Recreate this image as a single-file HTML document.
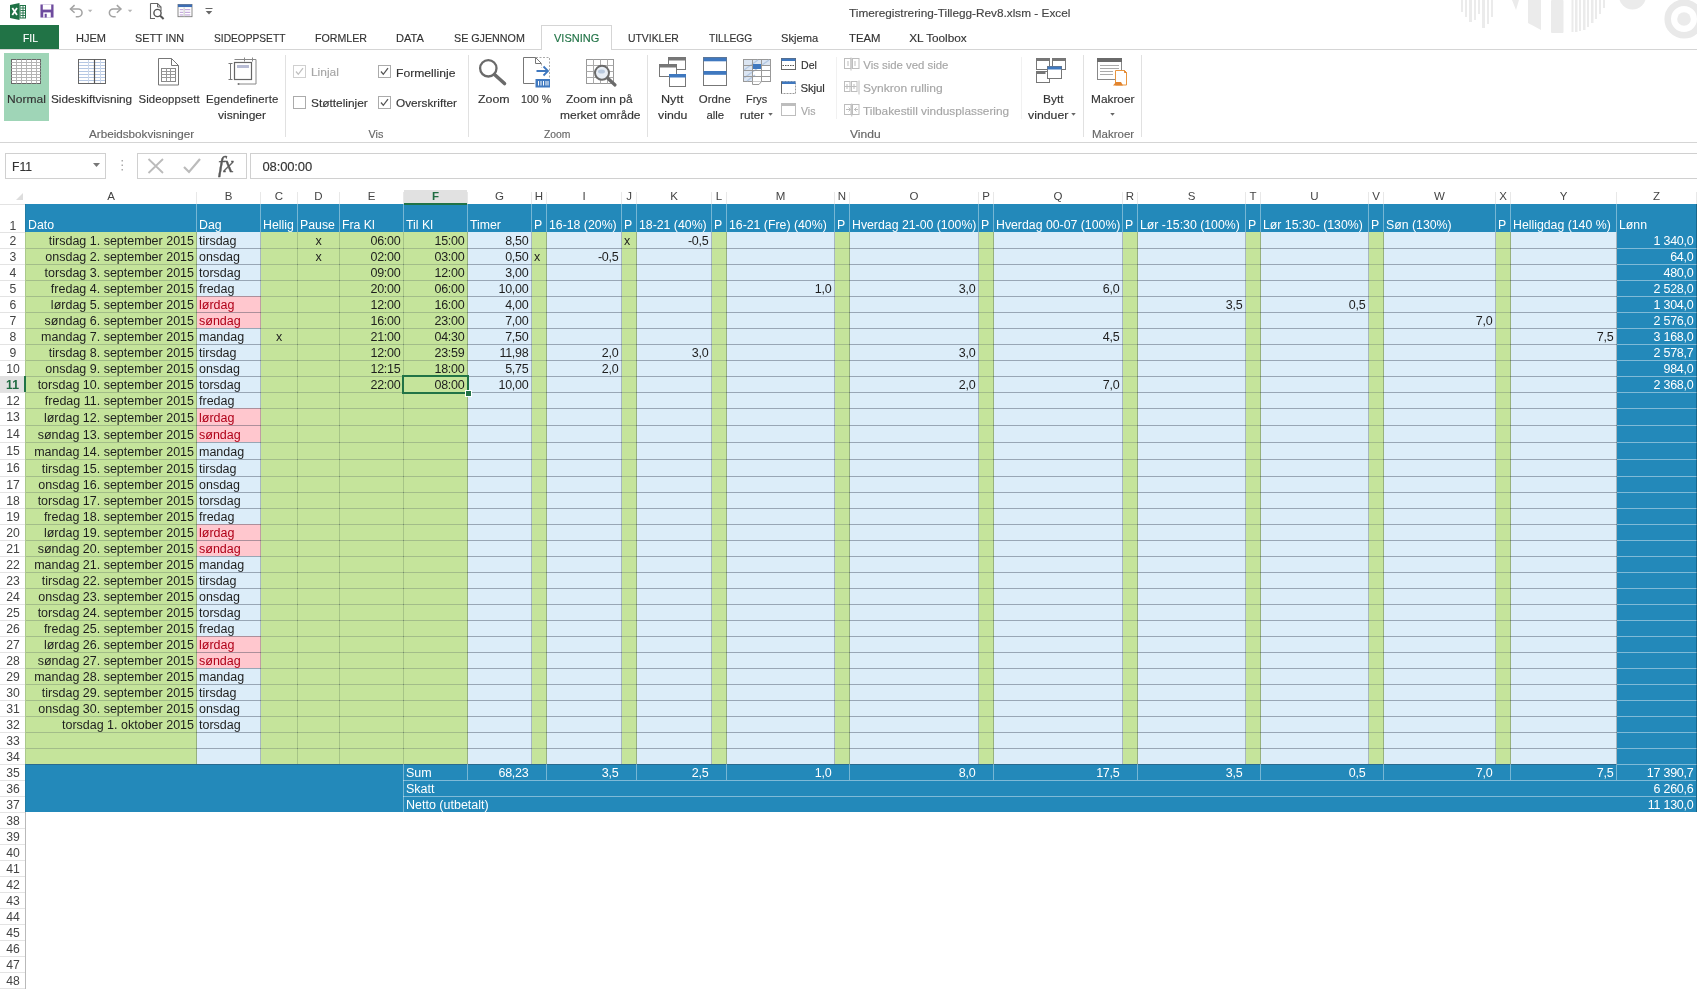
<!DOCTYPE html>
<html lang="nb"><head><meta charset="utf-8"><title>Timeregistrering-Tillegg-Rev8.xlsm - Excel</title>
<style>
html,body{margin:0;padding:0}
body{width:1697px;height:989px;overflow:hidden;background:#fff;position:relative;font-family:"Liberation Sans",sans-serif;color:#444}
#grid,#top{position:absolute;left:0;top:0;width:1697px;height:989px;will-change:transform}
#grid div,#grid i,#top div,#top i,#top svg,#top span.a{position:absolute}
i{display:block}
.blk{}
.ch{top:189px;height:15px;line-height:15px;text-align:center;font-size:11.5px;color:#444}
.ch.sel{background:#e1e1e1;color:#1e6b41;border-bottom:2px solid #217346;height:13px;top:190px;line-height:13px;font-weight:bold;z-index:3}
.hd{top:192px;width:1px;height:12px;background:#e8e8e8}
.rh{left:0;width:25px;text-align:center;font-size:12.2px;color:#444;padding-left:1px;box-sizing:border-box}
.rh.sel{background:#e1e1e1;color:#1e6b41;border-right:2px solid #217346;box-sizing:border-box;width:26px;padding-left:1px;font-weight:bold;z-index:3}
.rh.sel{padding-right:0}
.rd{left:0;width:25px;height:1px;background:#e3e3e3}
.hl{height:1px;background:rgba(50,60,80,.40)}
.hlb{height:1px;background:rgba(255,255,255,.42)}
.vl{width:1px;background:rgba(45,60,60,.30)}
.vlb{width:1px;background:rgba(255,255,255,.38)}
.c{font-size:12.5px;color:#1e1e1e;white-space:nowrap;overflow:visible;box-sizing:border-box}
.c.r{text-align:right;padding-right:2px}
.c.l{text-align:left;padding-left:2px}
.c.ctr{text-align:center}
.c.w{color:#fff;-webkit-text-stroke-color:#fff}
.c.red{color:#b00018}
.c.h1{font-size:12.3px;color:#fff;-webkit-text-stroke-color:#fff;padding-left:2px;line-height:16px;padding-top:13px;height:28px;box-sizing:border-box}
#selbox{border:2px solid #217346;box-sizing:content-box}
#selh{width:5px;height:5px;background:#217346;border:1px solid #fff}
/* top */
#top{font-size:12px;color:#444}
.tab{top:27px;height:22px;line-height:22px;font-size:12.5px;color:#444;white-space:nowrap}
.t{white-space:nowrap;font-size:12px;color:#444;line-height:14px;-webkit-text-stroke:.15px currentColor}
.t.g{color:#a6a6a6}
.gl{top:127px;height:14px;line-height:14px;font-size:11px;color:#666;letter-spacing:.6px;white-space:nowrap;transform:translateX(-50%)}
.sep{top:55px;width:1px;height:82px;background:#e1e1e1}
.cb{width:11px;height:11px;border:1px solid #ababab;background:#fff}
.bt{text-align:center;transform:translateX(-50%);white-space:nowrap;font-size:12px;line-height:16px;color:#444}
.c.n{letter-spacing:-.25px;padding-right:2.5px}

.vl.g{background:rgba(45,70,50,.2)}

</style></head><body>
<div id="top">
<!-- decoration top right -->
<svg style="left:1440px;top:0" width="257" height="48" viewBox="0 0 257 48">
<g fill="#ebebeb">
<rect x="21" y="0" width="2" height="12"/><rect x="25" y="0" width="2" height="17"/><rect x="29" y="0" width="3" height="22"/><rect x="34" y="0" width="2" height="20"/><rect x="38" y="0" width="2" height="14"/><rect x="42" y="0" width="3" height="28"/><rect x="47" y="0" width="2" height="24"/><rect x="51" y="0" width="2" height="17"/>
<polygon points="72,0 79,0 76,10"/>
<polygon points="88,0 101,0 101,30 88,23"/>
<rect x="111" y="0" width="12.5" height="33" rx="1"/>
<rect x="131.5" y="0" width="2" height="32"/><rect x="135" y="0" width="2.5" height="32"/><rect x="139" y="0" width="2" height="31"/><rect x="143" y="0" width="2.5" height="30"/><rect x="147" y="0" width="2" height="27"/><rect x="151" y="0" width="2.5" height="23"/><rect x="155" y="0" width="2" height="19"/><rect x="159" y="0" width="2" height="14"/><rect x="163" y="0" width="2" height="8"/>
<circle cx="192.5" cy="-4" r="13.5"/>
<circle cx="244" cy="19" r="6.8"/>
</g>
<circle cx="244" cy="19" r="16.3" fill="none" stroke="#e9e9e9" stroke-width="6.6"/>
</svg>
<!-- QAT -->
<svg style="left:9px;top:2px" width="20" height="20" viewBox="0 0 20 20">
<path d="M1 3 L10.500 1 V18 L1 16Z" fill="#1e7145"/>
<rect x="11" y="3.5" width="5.5" height="12.5" fill="#fff" stroke="#1e7145" stroke-width="1"/>
<path d="M11.5 6h5M11.5 8.5h5M11.5 11h5M11.5 13.500h5M14 3.5v12.500" stroke="#1e7145" stroke-width=".9" fill="none"/>
<path d="M3.300 6 L8 13 M8 6 L3.300 13" stroke="#fff" stroke-width="1.8" fill="none"/>
</svg>
<svg style="left:40px;top:4px" width="14" height="14" viewBox="0 0 15 15">
<path d="M.5 .5h14v14h-14z" fill="#6e4b9e"/>
<rect x="3" y=".5" width="9" height="5.5" fill="#fff"/>
<rect x="3.5" y="9" width="8" height="5.5" fill="#fff"/>
<rect x="5" y="10.5" width="2.2" height="4" fill="#6e4b9e"/>
</svg>
<svg style="left:69px;top:4px" width="27" height="14.400" viewBox="0 0 30 16">
<path d="M2 5.5h8.2a4.3 4.3 0 0 1 0 8.6H7.5" fill="none" stroke="#a3a3a3" stroke-width="1.7"/>
<path d="M6.2 1.2 L1.6 5.5 L6.2 9.8" fill="none" stroke="#a3a3a3" stroke-width="1.7"/>
<path d="M21 6.5h5l-2.5 2.6z" fill="#b5b5b5"/>
</svg>
<svg style="left:108px;top:4px" width="27" height="14.400" viewBox="0 0 30 16">
<path d="M14 5.5H5.8a4.3 4.3 0 0 0 0 8.6H8.5" fill="none" stroke="#a3a3a3" stroke-width="1.7"/>
<path d="M9.8 1.2 L14.4 5.5 L9.8 9.8" fill="none" stroke="#a3a3a3" stroke-width="1.7"/>
<path d="M22 6.5h5l-2.5 2.6z" fill="#b5b5b5"/>
</svg>
<svg style="left:149px;top:2px" width="18" height="18" viewBox="0 0 18 18">
<path d="M1.5 1.5h7l3.5 3.5v4 M6 16.5H1.5v-15" fill="none" stroke="#666" stroke-width="1.1"/>
<path d="M8.5 1.5v3.5h3.5" fill="none" stroke="#666" stroke-width="1"/>
<circle cx="8.5" cy="11" r="3.6" fill="#fff" stroke="#555" stroke-width="1.4"/>
<path d="M11 13.6l3.6 3.4" stroke="#555" stroke-width="2"/>
</svg>
<svg style="left:177px;top:4px" width="16" height="14" viewBox="0 0 17 16">
<rect x=".5" y=".5" width="16" height="14" fill="#fff" stroke="#7a7a7a" stroke-width="1"/>
<rect x=".5" y=".5" width="16" height="3" fill="#3d6db3"/>
<path d="M2.5 6.5h4M8.5 6.5h6M2.5 9.5h4M8.5 9.5h6M2.5 12.5h4M8.5 12.5h6" stroke="#b08ad0" stroke-width="1"/>
<path d="M7.5 4v10.5" stroke="#bbb" stroke-width="1"/>
</svg>
<svg style="left:205px;top:7px" width="8" height="9" viewBox="0 0 8 9"><path d="M.5 1.5h7" stroke="#666" stroke-width="1"/><path d="M.8 4h6.4L4 7.5z" fill="#666"/></svg>
<!-- tabs -->
<div style="left:0;top:25px;width:59px;height:25px;background:#217346"></div>
<div style="left:0;top:49px;width:1697px;height:1px;background:#d5d5d5"></div>
<div style="left:541px;top:25px;width:71px;height:25px;background:#fff;border:1px solid #d5d5d5;border-bottom:none;box-sizing:border-box"></div>
<!-- ribbon bottom -->
<div style="left:0;top:142px;width:1697px;height:1px;background:#d5d5d5"></div>
<!-- Normal highlight -->
<div style="left:4px;top:53px;width:45px;height:68px;background:#9fd5b7"></div>
<!-- group separators -->
<i class="sep" style="left:285px"></i><i class="sep" style="left:468px"></i><i class="sep" style="left:647px"></i><i class="sep" style="left:1083px"></i><i class="sep" style="left:1141px"></i>
<i class="sep" style="left:836px;top:57px;height:62px;background:#f1f1f1"></i><i class="sep" style="left:1021px;top:57px;height:62px;background:#f1f1f1"></i>
<!-- big icons -->
<svg style="left:11px;top:59px" width="30" height="25" viewBox="0 0 30 25">
<rect x=".5" y=".5" width="29" height="24" fill="#fff" stroke="#666" stroke-width="1"/>
<path d="M.5 3.5h29M.5 6.5h29M.5 9.5h29M.5 12.5h29M.5 15.5h29M.5 18.5h29M.5 21.5h29M5.5 .5v24M10.5 .5v24M15.5 .5v24M20.5 .5v24M25.5 .5v24" stroke="#b4b4b4" stroke-width="1" fill="none"/>
</svg>
<svg style="left:78px;top:59px" width="28" height="26" viewBox="0 0 28 26">
<rect x=".5" y=".5" width="27" height="24" fill="#fff" stroke="#666" stroke-width="1"/>
<path d="M1 3.5h26M1 6.5h26M1 9.5h26M1 12.5h26M1 15.5h26M1 18.5h26M1 21.5h26" stroke="#b5c7e3" stroke-width="1" fill="none"/>
<path d="M10.500 1v23M22.500 1v23" stroke="#c9d6ea" stroke-width="1" fill="none"/>
<path d="M16.500 .5v24" stroke="#555" stroke-width="1.200"/>
</svg>
<svg style="left:158px;top:58px" width="21" height="28" viewBox="0 0 21 28">
<path d="M.5 .5h13l7 7v19.5h-20z" fill="#fff" stroke="#777" stroke-width="1"/>
<path d="M13.5 .5v7h7" fill="none" stroke="#777" stroke-width="1"/>
<rect x="3.5" y="10.500" width="14" height="13" fill="#fff" stroke="#888" stroke-width="1"/>
<path d="M3.500 13.500h14M3.500 16.500h14M3.500 19.500h14M8.500 10.500v13M12.500 10.500v13" stroke="#999" stroke-width="1" fill="none"/>
</svg>
<svg style="left:228px;top:57px" width="29" height="29" viewBox="0 0 29 29">
<path d="M2.500 6v17M.5 6.500h4M.5 22.500h4" stroke="#777" stroke-width="1" fill="none"/>
<path d="M6.500 2.500h21.500v24.500h-17.500 M16.500 .5v4 M24.500 .5v4" stroke="#888" stroke-width="1" fill="none"/>
<rect x="6.500" y="5.500" width="17" height="17" fill="#fff" stroke="#666" stroke-width="1.2"/>
<rect x="9" y="8" width="12" height="3" fill="#b8bcd4"/>
<circle cx="10.500" cy="27" r="1" fill="#777"/>
</svg>
<!-- checkboxes -->
<div class="cb" style="left:293px;top:65px;border-color:#d0d0d0"></div>
<svg style="left:294px;top:66px" width="11" height="11" viewBox="0 0 11 11"><path d="M2 5.500l2.300 2.800L9 2.200" fill="none" stroke="#c0c0c0" stroke-width="1.3"/></svg>
<div class="cb" style="left:293px;top:96px"></div>
<div class="cb" style="left:378px;top:65px"></div>
<svg style="left:379px;top:66px" width="11" height="11" viewBox="0 0 11 11"><path d="M2 5.500l2.300 2.800L9 2.200" fill="none" stroke="#555" stroke-width="1.3"/></svg>
<div class="cb" style="left:378px;top:96px"></div>
<svg style="left:379px;top:97px" width="11" height="11" viewBox="0 0 11 11"><path d="M2 5.500l2.300 2.800L9 2.200" fill="none" stroke="#555" stroke-width="1.3"/></svg>
<!-- zoom icons -->
<svg style="left:477px;top:57px" width="32" height="30" viewBox="0 0 32 30">
<circle cx="11.300" cy="11.300" r="8.200" fill="#fff" stroke="#6a6a6a" stroke-width="2.300"/>
<path d="M17.500 17.500l10 9" stroke="#6a6a6a" stroke-width="3.600" stroke-linecap="round"/>
</svg>
<svg style="left:522px;top:56px" width="29" height="33" viewBox="0 0 29 33">
<path d="M1.500 1.500h12l6 6" fill="none" stroke="#777" stroke-width="1"/>
<path d="M1.500 1.500v26h11" fill="none" stroke="#777" stroke-width="1"/>
<path d="M13.500 1.500v6h6" fill="none" stroke="#777" stroke-width="1"/>
<path d="M14 1.500h13.500v20M19.500 7.500v4" fill="none" stroke="#aaa" stroke-width="1" stroke-dasharray="2 1.500"/>
<path d="M14.500 15h11M21.500 10.500l4.500 4.500l-4.500 4.500" fill="none" stroke="#3f78bf" stroke-width="1.800"/>
<rect x="13.500" y="23" width="14.500" height="8.500" fill="#3f78bf"/>
<path d="M16.500 25v4.500M19 25v4.500M21.500 25v4.500M24 25v4.500M26 25v4.500" stroke="#fff" stroke-width="1"/>
</svg>
<svg style="left:586px;top:58px" width="32" height="30" viewBox="0 0 32 30">
<rect x=".5" y="1.500" width="27" height="24" fill="#fff" stroke="#999" stroke-width="1"/>
<path d="M.5 7.500h27M.5 13.500h27M.5 19.500h27M7.500 1.500v24M14.500 1.500v24M21.500 1.500v24" stroke="#aaa" stroke-width="1" fill="none"/>
<circle cx="16" cy="14.800" r="7" fill="#e8eef6" stroke="#6a6a6a" stroke-width="2"/>
<ellipse cx="15.500" cy="13.500" rx="3.500" ry="2" fill="#b9c9de"/>
<path d="M21.500 20l7.500 7" stroke="#6a6a6a" stroke-width="3.200" stroke-linecap="round"/>
</svg>
<!-- Nytt vindu -->
<svg style="left:658px;top:56px" width="29" height="32" viewBox="0 0 29 32">
<rect x="10.500" y="1.500" width="17" height="12" fill="#fff" stroke="#777" stroke-width="1"/><rect x="10.500" y="1.500" width="17" height="3" fill="#777"/>
<rect x="1.500" y="8.500" width="17" height="12" fill="#fff" stroke="#777" stroke-width="1"/><rect x="1.500" y="8.500" width="17" height="3" fill="#777"/>
<rect x="11.500" y="18.500" width="16" height="12" fill="#fff" stroke="#777" stroke-width="1"/><rect x="11" y="18" width="17" height="3.500" fill="#3f78bf"/>
</svg>
<!-- Ordne alle -->
<svg style="left:703px;top:56px" width="25" height="31" viewBox="0 0 25 31">
<rect x=".5" y="1.500" width="23" height="28" fill="#fff" stroke="#777" stroke-width="1"/>
<rect x=".5" y="1.500" width="23" height="3.800" fill="#3f78bf"/>
<rect x=".5" y="15" width="23" height="3.800" fill="#3f78bf"/>
</svg>
<!-- Frys ruter -->
<svg style="left:743px;top:58px" width="29" height="28" viewBox="0 0 29 28">
<rect x=".5" y="1.500" width="27" height="22" fill="#fff" stroke="#999" stroke-width="1"/>
<rect x="1" y="2" width="26" height="5" fill="#dbe5f2"/><rect x="1" y="2" width="8" height="21" fill="#dbe5f2"/>
<path d="M1 12l14-10M1 20l25-18M4 23l8-6" stroke="#b4c8e2" stroke-width="1.500" fill="none"/>
<path d="M.5 7.500h27M.5 12.500h27M.5 18.500h27M9.500 1.500v22M18.500 1.500v22" stroke="#999" stroke-width="1" fill="none"/>
<rect x="10" y="6" width="8" height="5" fill="#3f78bf"/>
<path d="M9.500 23.500v3h6.500l2.500-3" fill="#fff" stroke="#999" stroke-width="1"/>
</svg>
<svg style="left:768px;top:113px" width="5" height="3" viewBox="0 0 6 4"><path d="M0 0h6L3 3.500z" fill="#666"/></svg>
<!-- Del / Skjul / Vis -->
<svg style="left:781px;top:58px" width="16" height="13" viewBox="0 0 16 13"><rect x=".5" y=".5" width="14" height="11" fill="#fff" stroke="#666" stroke-width="1"/><rect x=".5" y=".5" width="14" height="2.500" fill="#3f78bf"/><path d="M1.500 7.500h12" stroke="#555" stroke-width="1" stroke-dasharray="1.500 1"/></svg>
<svg style="left:781px;top:81px" width="16" height="14" viewBox="0 0 16 14"><rect x=".5" y=".5" width="14" height="12" fill="#fff" stroke="#999" stroke-width="1" stroke-dasharray="2 1"/><rect x=".5" y=".5" width="14" height="2.500" fill="#3f78bf"/><path d="M.5 .5v12" stroke="#666"/></svg>
<svg style="left:781px;top:103px" width="16" height="14" viewBox="0 0 16 14"><rect x=".5" y=".5" width="14" height="12" fill="#fff" stroke="#bdbdbd" stroke-width="1"/><rect x=".5" y=".5" width="14" height="2.500" fill="#bdbdbd"/></svg>
<!-- side-by-side icons (disabled) -->
<svg style="left:844px;top:57px" width="16" height="14" viewBox="0 0 16 14"><g fill="none" stroke="#bdbdbd" stroke-width="1"><rect x=".5" y="1.500" width="6.500" height="10"/><rect x="8.500" y="1.500" width="6.500" height="10"/><path d="M7 .5v13M4 4v5M11 4v5"/></g></svg>
<svg style="left:844px;top:80px" width="16" height="15" viewBox="0 0 16 15"><g fill="none" stroke="#bdbdbd" stroke-width="1"><rect x=".5" y="1.500" width="5.500" height="10"/><rect x="7.500" y="1.500" width="5.500" height="10"/><path d="M15 .5v14M3 4v5M10 4v5M.5 6.500h12"/></g></svg>
<svg style="left:844px;top:103px" width="16" height="14" viewBox="0 0 16 14"><g fill="none" stroke="#bdbdbd" stroke-width="1"><rect x=".5" y="1.500" width="6.500" height="10"/><rect x="8.500" y="1.500" width="6.500" height="10"/><path d="M2 6.500h4M10 6.500h4M4.500 4.500l2 2l-2 2M12.500 4.500l-2 2l2 2M7.750 .5v13"/></g></svg>
<!-- Bytt vinduer -->
<svg style="left:1036px;top:57px" width="31" height="27" viewBox="0 0 31 27">
<rect x=".5" y="1.500" width="13" height="11" fill="#fff" stroke="#777"/><rect x=".5" y="1.500" width="13" height="2.500" fill="#777"/>
<rect x="16.500" y="1.500" width="13" height="11" fill="#fff" stroke="#777"/><rect x="16.500" y="1.500" width="13" height="2.500" fill="#777"/>
<rect x=".5" y="14.500" width="13" height="11" fill="#fff" stroke="#777"/><rect x=".5" y="14.500" width="9" height="2.500" fill="#777"/>
<rect x="11.500" y="9.500" width="14" height="12" fill="#fff" stroke="#777"/><rect x="11.500" y="9.500" width="14" height="3" fill="#3f78bf"/>
</svg>
<svg style="left:1071px;top:113px" width="5" height="3" viewBox="0 0 6 4"><path d="M0 0h6L3 3.500z" fill="#666"/></svg>
<!-- Makroer -->
<svg style="left:1097px;top:57px" width="32" height="30" viewBox="0 0 32 30">
<rect x=".5" y="1.500" width="24" height="21" fill="#fff" stroke="#888"/><rect x="0" y="1" width="25" height="4" fill="#6a6a6a"/>
<path d="M3 8.500h19M3 11.500h19M3 14.500h13M3 17.500h13" stroke="#aaa" stroke-width="1"/>
<path d="M18.500 13.500h9l2 2v12.500h-11z" fill="#fff" stroke="#e8953f" stroke-width="1"/>
<path d="M16 28.500l3-3.500h5l2 3.500z" fill="#e2842d"/>
<path d="M27.500 13.500v2h2" fill="#e2842d" stroke="#e2842d"/>
</svg>
<svg style="left:1110px;top:113px" width="5" height="3" viewBox="0 0 6 4"><path d="M0 0h6L3 3.500z" fill="#666"/></svg>
<!-- formula bar -->
<div style="left:5px;top:153px;width:101px;height:26px;border:1px solid #d0d0d0;box-sizing:border-box"></div>
<svg style="left:93px;top:163px" width="8" height="5" viewBox="0 0 8 5"><path d="M0 0h7L3.500 4z" fill="#777"/></svg>
<svg style="left:121px;top:160px" width="3" height="12" viewBox="0 0 3 12"><rect x=".5" y="0" width="1.500" height="1.500" fill="#aaa"/><rect x=".5" y="4.500" width="1.500" height="1.500" fill="#aaa"/><rect x=".5" y="9" width="1.500" height="1.500" fill="#aaa"/></svg>
<div style="left:137px;top:153px;width:110px;height:26px;border:1px solid #d0d0d0;box-sizing:border-box"></div>
<svg style="left:147px;top:157px" width="18" height="18" viewBox="0 0 18 18"><path d="M1.500 2l14.500 14M16 2L1.500 16" stroke="#bbb" stroke-width="1.800" fill="none"/></svg>
<svg style="left:183px;top:157px" width="18" height="18" viewBox="0 0 18 18"><path d="M1 10l5 5L17 2" stroke="#bbb" stroke-width="2.200" fill="none"/></svg>
<div style="left:218px;top:154px;width:22px;height:24px;font-family:'Liberation Serif',serif;font-style:italic;font-size:23px;line-height:22px;color:#5a5a5a;letter-spacing:-1px;-webkit-text-stroke:.35px #5a5a5a">fx</div>
<div style="left:250px;top:153px;width:1460px;height:26px;border:1px solid #d0d0d0;box-sizing:border-box"></div>
<!-- select-all triangle -->
<svg style="left:15px;top:192px" width="9" height="9" viewBox="0 0 9 9"><path d="M8 1v7H1z" fill="#ddd"/></svg>
<div class="t" style="left:848.5px;top:5.0px;font-size:11.4px;color:#444;transform:scaleX(1.036);transform-origin:0 50%;line-height:16px;">Timeregistrering-Tillegg-Rev8.xlsm - Excel</div>
<div class="t" style="left:22.6px;top:29.5px;font-size:11.8px;color:#fff;transform:scaleX(0.874);transform-origin:0 50%;line-height:16px;">FIL</div>
<div class="t" style="left:76.0px;top:29.5px;font-size:11.8px;color:#333;transform:scaleX(0.934);transform-origin:0 50%;line-height:16px;">HJEM</div>
<div class="t" style="left:135.4px;top:29.5px;font-size:11.8px;color:#333;transform:scaleX(0.915);transform-origin:0 50%;line-height:16px;">SETT INN</div>
<div class="t" style="left:214.3px;top:29.5px;font-size:11.8px;color:#333;transform:scaleX(0.864);transform-origin:0 50%;line-height:16px;">SIDEOPPSETT</div>
<div class="t" style="left:315.0px;top:29.5px;font-size:11.8px;color:#333;transform:scaleX(0.902);transform-origin:0 50%;line-height:16px;">FORMLER</div>
<div class="t" style="left:396.4px;top:29.5px;font-size:11.8px;color:#333;transform:scaleX(0.939);transform-origin:0 50%;line-height:16px;">DATA</div>
<div class="t" style="left:454.0px;top:29.5px;font-size:11.8px;color:#333;transform:scaleX(0.908);transform-origin:0 50%;line-height:16px;">SE GJENNOM</div>
<div class="t" style="left:554.0px;top:29.5px;font-size:11.8px;color:#217346;transform:scaleX(0.934);transform-origin:0 50%;line-height:16px;">VISNING</div>
<div class="t" style="left:628.2px;top:29.5px;font-size:11.8px;color:#333;transform:scaleX(0.881);transform-origin:0 50%;line-height:16px;">UTVIKLER</div>
<div class="t" style="left:708.7px;top:29.5px;font-size:11.8px;color:#333;transform:scaleX(0.869);transform-origin:0 50%;line-height:16px;">TILLEGG</div>
<div class="t" style="left:781.3px;top:29.5px;font-size:11.8px;color:#333;transform:scaleX(0.943);transform-origin:0 50%;line-height:16px;">Skjema</div>
<div class="t" style="left:848.5px;top:29.5px;font-size:11.8px;color:#333;transform:scaleX(0.961);transform-origin:0 50%;line-height:16px;">TEAM</div>
<div class="t" style="left:909.2px;top:29.5px;font-size:11.8px;color:#333;letter-spacing:-0.03px;line-height:16px;">XL Toolbox</div>
<div class="t" style="left:6.5px;top:91.0px;font-size:11.4px;color:#333;transform:scaleX(1.057);transform-origin:0 50%;line-height:16px;">Normal</div>
<div class="t" style="left:51.3px;top:91.0px;font-size:11.4px;color:#333;transform:scaleX(1.034);transform-origin:0 50%;line-height:16px;">Sideskiftvisning</div>
<div class="t" style="left:138.5px;top:91.0px;font-size:11.4px;color:#333;letter-spacing:0.09px;line-height:16px;">Sideoppsett</div>
<div class="t" style="left:206.0px;top:91.0px;font-size:11.4px;color:#333;letter-spacing:0.11px;line-height:16px;">Egendefinerte</div>
<div class="t" style="left:218.0px;top:107.0px;font-size:11.4px;color:#333;transform:scaleX(1.053);transform-origin:0 50%;line-height:16px;">visninger</div>
<div class="t" style="left:477.7px;top:91.0px;font-size:11.4px;color:#333;transform:scaleX(1.085);transform-origin:0 50%;line-height:16px;">Zoom</div>
<div class="t" style="left:520.8px;top:91.0px;font-size:11.4px;color:#333;transform:scaleX(0.935);transform-origin:0 50%;line-height:16px;">100 %</div>
<div class="t" style="left:566.3px;top:91.0px;font-size:11.4px;color:#333;transform:scaleX(1.053);transform-origin:0 50%;line-height:16px;">Zoom inn på</div>
<div class="t" style="left:559.5px;top:107.0px;font-size:11.4px;color:#333;transform:scaleX(1.051);transform-origin:0 50%;line-height:16px;">merket område</div>
<div class="t" style="left:661.3px;top:91.0px;font-size:11.4px;color:#333;transform:scaleX(1.106);transform-origin:0 50%;line-height:16px;">Nytt</div>
<div class="t" style="left:658.0px;top:107.0px;font-size:11.4px;color:#333;transform:scaleX(1.080);transform-origin:0 50%;line-height:16px;">vindu</div>
<div class="t" style="left:698.7px;top:91.0px;font-size:11.4px;color:#333;letter-spacing:0.11px;line-height:16px;">Ordne</div>
<div class="t" style="left:706.6px;top:107.0px;font-size:11.4px;color:#333;letter-spacing:-0.08px;line-height:16px;">alle</div>
<div class="t" style="left:745.8px;top:91.0px;font-size:11.4px;color:#333;transform:scaleX(0.953);transform-origin:0 50%;line-height:16px;">Frys</div>
<div class="t" style="left:740.4px;top:107.0px;font-size:11.4px;color:#333;transform:scaleX(1.029);transform-origin:0 50%;line-height:16px;">ruter</div>
<div class="t" style="left:1042.8px;top:91.0px;font-size:11.4px;color:#333;transform:scaleX(1.045);transform-origin:0 50%;line-height:16px;">Bytt</div>
<div class="t" style="left:1028.0px;top:107.0px;font-size:11.4px;color:#333;transform:scaleX(1.079);transform-origin:0 50%;line-height:16px;">vinduer</div>
<div class="t" style="left:1090.5px;top:91.0px;font-size:11.4px;color:#333;transform:scaleX(1.041);transform-origin:0 50%;line-height:16px;">Makroer</div>
<div class="t" style="left:311.0px;top:64.0px;font-size:11.4px;color:#a6a6a6;transform:scaleX(1.045);transform-origin:0 50%;line-height:16px;">Linjal</div>
<div class="t" style="left:311.0px;top:95.1px;font-size:11.4px;color:#333;transform:scaleX(1.043);transform-origin:0 50%;line-height:16px;">Støttelinjer</div>
<div class="t" style="left:396.0px;top:64.5px;font-size:11.4px;color:#333;transform:scaleX(1.066);transform-origin:0 50%;line-height:16px;">Formellinje</div>
<div class="t" style="left:396.0px;top:95.1px;font-size:11.4px;color:#333;transform:scaleX(1.035);transform-origin:0 50%;line-height:16px;">Overskrifter</div>
<div class="t" style="left:800.5px;top:56.8px;font-size:11.4px;color:#333;transform:scaleX(0.930);transform-origin:0 50%;line-height:16px;">Del</div>
<div class="t" style="left:800.5px;top:79.9px;font-size:11.4px;color:#333;letter-spacing:-0.10px;line-height:16px;">Skjul</div>
<div class="t" style="left:800.5px;top:102.6px;font-size:11.4px;color:#a6a6a6;transform:scaleX(0.928);transform-origin:0 50%;line-height:16px;">Vis</div>
<div class="t" style="left:863.3px;top:56.8px;font-size:11.4px;color:#a6a6a6;letter-spacing:-0.01px;line-height:16px;">Vis side ved side</div>
<div class="t" style="left:863.3px;top:79.9px;font-size:11.4px;color:#a6a6a6;transform:scaleX(1.057);transform-origin:0 50%;line-height:16px;">Synkron rulling</div>
<div class="t" style="left:863.3px;top:102.6px;font-size:11.4px;color:#a6a6a6;transform:scaleX(1.038);transform-origin:0 50%;line-height:16px;">Tilbakestill vindusplassering</div>
<div class="t" style="left:89.3px;top:126.0px;font-size:10.8px;color:#666;transform:scaleX(1.081);transform-origin:0 50%;line-height:16px;">Arbeidsbokvisninger</div>
<div class="t" style="left:368.5px;top:126.0px;font-size:10.8px;color:#666;letter-spacing:0.07px;line-height:16px;">Vis</div>
<div class="t" style="left:544.0px;top:126.0px;font-size:10.8px;color:#666;transform:scaleX(0.960);transform-origin:0 50%;line-height:16px;">Zoom</div>
<div class="t" style="left:850.2px;top:126.0px;font-size:10.8px;color:#666;transform:scaleX(1.116);transform-origin:0 50%;line-height:16px;">Vindu</div>
<div class="t" style="left:1091.6px;top:126.0px;font-size:10.8px;color:#666;transform:scaleX(1.063);transform-origin:0 50%;line-height:16px;">Makroer</div>
<div class="t" style="left:12.4px;top:158.7px;font-size:13px;color:#333;transform:scaleX(0.938);transform-origin:0 50%;line-height:16px;">F11</div>
<div class="t" style="left:262.5px;top:158.7px;font-size:13px;color:#333;letter-spacing:-0.14px;line-height:16px;">08:00:00</div></div>

<div id="grid">
<div class="ch" style="left:26px;width:170px">A</div>
<div class="ch" style="left:197px;width:63px">B</div>
<div class="ch" style="left:261px;width:36px">C</div>
<div class="ch" style="left:298px;width:41px">D</div>
<div class="ch" style="left:340px;width:63px">E</div>
<div class="ch sel" style="left:404px;width:63px">F</div>
<div class="ch" style="left:468px;width:63px">G</div>
<div class="ch" style="left:532px;width:14px">H</div>
<div class="ch" style="left:547px;width:74px">I</div>
<div class="ch" style="left:622px;width:14px">J</div>
<div class="ch" style="left:637px;width:74px">K</div>
<div class="ch" style="left:712px;width:14px">L</div>
<div class="ch" style="left:727px;width:107px">M</div>
<div class="ch" style="left:835px;width:14px">N</div>
<div class="ch" style="left:850px;width:128px">O</div>
<div class="ch" style="left:979px;width:14px">P</div>
<div class="ch" style="left:994px;width:128px">Q</div>
<div class="ch" style="left:1123px;width:14px">R</div>
<div class="ch" style="left:1138px;width:107px">S</div>
<div class="ch" style="left:1246px;width:14px">T</div>
<div class="ch" style="left:1261px;width:107px">U</div>
<div class="ch" style="left:1369px;width:14px">V</div>
<div class="ch" style="left:1384px;width:111px">W</div>
<div class="ch" style="left:1496px;width:14px">X</div>
<div class="ch" style="left:1511px;width:105px">Y</div>
<div class="ch" style="left:1617px;width:79px">Z</div>
<i class="hd" style="left:196px"></i>
<i class="hd" style="left:260px"></i>
<i class="hd" style="left:297px"></i>
<i class="hd" style="left:339px"></i>
<i class="hd" style="left:403px"></i>
<i class="hd" style="left:467px"></i>
<i class="hd" style="left:531px"></i>
<i class="hd" style="left:546px"></i>
<i class="hd" style="left:621px"></i>
<i class="hd" style="left:636px"></i>
<i class="hd" style="left:711px"></i>
<i class="hd" style="left:726px"></i>
<i class="hd" style="left:834px"></i>
<i class="hd" style="left:849px"></i>
<i class="hd" style="left:978px"></i>
<i class="hd" style="left:993px"></i>
<i class="hd" style="left:1122px"></i>
<i class="hd" style="left:1137px"></i>
<i class="hd" style="left:1245px"></i>
<i class="hd" style="left:1260px"></i>
<i class="hd" style="left:1368px"></i>
<i class="hd" style="left:1383px"></i>
<i class="hd" style="left:1495px"></i>
<i class="hd" style="left:1510px"></i>
<i class="hd" style="left:1616px"></i>
<i class="hd" style="left:1696px"></i>
<div class="rh" style="top:204px;height:28px;line-height:28px"><span style="position:relative;top:7.5px">1</span></div>
<div class="rh" style="top:232px;height:16px;line-height:18px">2</div>
<div class="rh" style="top:248px;height:16px;line-height:18px">3</div>
<div class="rh" style="top:264px;height:16px;line-height:18px">4</div>
<div class="rh" style="top:280px;height:16px;line-height:18px">5</div>
<div class="rh" style="top:296px;height:16px;line-height:18px">6</div>
<div class="rh" style="top:312px;height:16px;line-height:18px">7</div>
<div class="rh" style="top:328px;height:16px;line-height:18px">8</div>
<div class="rh" style="top:344px;height:16px;line-height:18px">9</div>
<div class="rh" style="top:360px;height:16px;line-height:18px">10</div>
<div class="rh sel" style="top:376px;height:16px;line-height:18px">11</div>
<div class="rh" style="top:392px;height:16px;line-height:18px">12</div>
<div class="rh" style="top:408px;height:17px;line-height:19px">13</div>
<div class="rh" style="top:425px;height:17px;line-height:19px">14</div>
<div class="rh" style="top:442px;height:17px;line-height:19px">15</div>
<div class="rh" style="top:459px;height:17px;line-height:19px">16</div>
<div class="rh" style="top:476px;height:16px;line-height:18px">17</div>
<div class="rh" style="top:492px;height:16px;line-height:18px">18</div>
<div class="rh" style="top:508px;height:16px;line-height:18px">19</div>
<div class="rh" style="top:524px;height:16px;line-height:18px">20</div>
<div class="rh" style="top:540px;height:16px;line-height:18px">21</div>
<div class="rh" style="top:556px;height:16px;line-height:18px">22</div>
<div class="rh" style="top:572px;height:16px;line-height:18px">23</div>
<div class="rh" style="top:588px;height:16px;line-height:18px">24</div>
<div class="rh" style="top:604px;height:16px;line-height:18px">25</div>
<div class="rh" style="top:620px;height:16px;line-height:18px">26</div>
<div class="rh" style="top:636px;height:16px;line-height:18px">27</div>
<div class="rh" style="top:652px;height:16px;line-height:18px">28</div>
<div class="rh" style="top:668px;height:16px;line-height:18px">29</div>
<div class="rh" style="top:684px;height:16px;line-height:18px">30</div>
<div class="rh" style="top:700px;height:16px;line-height:18px">31</div>
<div class="rh" style="top:716px;height:16px;line-height:18px">32</div>
<div class="rh" style="top:732px;height:16px;line-height:18px">33</div>
<div class="rh" style="top:748px;height:16px;line-height:18px">34</div>
<div class="rh" style="top:764px;height:16px;line-height:18px">35</div>
<div class="rh" style="top:780px;height:16px;line-height:18px">36</div>
<div class="rh" style="top:796px;height:16px;line-height:18px">37</div>
<div class="rh" style="top:812px;height:16px;line-height:18px">38</div>
<div class="rh" style="top:828px;height:16px;line-height:18px">39</div>
<div class="rh" style="top:844px;height:16px;line-height:18px">40</div>
<div class="rh" style="top:860px;height:16px;line-height:18px">41</div>
<div class="rh" style="top:876px;height:16px;line-height:18px">42</div>
<div class="rh" style="top:892px;height:16px;line-height:18px">43</div>
<div class="rh" style="top:908px;height:16px;line-height:18px">44</div>
<div class="rh" style="top:924px;height:16px;line-height:18px">45</div>
<div class="rh" style="top:940px;height:16px;line-height:18px">46</div>
<div class="rh" style="top:956px;height:16px;line-height:18px">47</div>
<div class="rh" style="top:972px;height:16px;line-height:18px">48</div>
<i class="rd" style="top:232px"></i>
<i class="rd" style="top:248px"></i>
<i class="rd" style="top:264px"></i>
<i class="rd" style="top:280px"></i>
<i class="rd" style="top:296px"></i>
<i class="rd" style="top:312px"></i>
<i class="rd" style="top:328px"></i>
<i class="rd" style="top:344px"></i>
<i class="rd" style="top:360px"></i>
<i class="rd" style="top:376px"></i>
<i class="rd" style="top:392px"></i>
<i class="rd" style="top:408px"></i>
<i class="rd" style="top:425px"></i>
<i class="rd" style="top:442px"></i>
<i class="rd" style="top:459px"></i>
<i class="rd" style="top:476px"></i>
<i class="rd" style="top:492px"></i>
<i class="rd" style="top:508px"></i>
<i class="rd" style="top:524px"></i>
<i class="rd" style="top:540px"></i>
<i class="rd" style="top:556px"></i>
<i class="rd" style="top:572px"></i>
<i class="rd" style="top:588px"></i>
<i class="rd" style="top:604px"></i>
<i class="rd" style="top:620px"></i>
<i class="rd" style="top:636px"></i>
<i class="rd" style="top:652px"></i>
<i class="rd" style="top:668px"></i>
<i class="rd" style="top:684px"></i>
<i class="rd" style="top:700px"></i>
<i class="rd" style="top:716px"></i>
<i class="rd" style="top:732px"></i>
<i class="rd" style="top:748px"></i>
<i class="rd" style="top:764px"></i>
<i class="rd" style="top:780px"></i>
<i class="rd" style="top:796px"></i>
<i class="rd" style="top:812px"></i>
<i class="rd" style="top:828px"></i>
<i class="rd" style="top:844px"></i>
<i class="rd" style="top:860px"></i>
<i class="rd" style="top:876px"></i>
<i class="rd" style="top:892px"></i>
<i class="rd" style="top:908px"></i>
<i class="rd" style="top:924px"></i>
<i class="rd" style="top:940px"></i>
<i class="rd" style="top:956px"></i>
<i class="rd" style="top:972px"></i>
<i class="rd" style="top:988px"></i>
<div class="blk" style="left:25px;top:204px;width:1672px;height:28px;background:#2389ba"></div>
<div class="blk" style="left:25px;top:232px;width:172px;height:532px;background:#c5e49b"></div>
<div class="blk" style="left:197px;top:232px;width:64px;height:532px;background:#dcedf9"></div>
<div class="blk" style="left:261px;top:232px;width:37px;height:532px;background:#c5e49b"></div>
<div class="blk" style="left:298px;top:232px;width:42px;height:532px;background:#c5e49b"></div>
<div class="blk" style="left:340px;top:232px;width:64px;height:532px;background:#c5e49b"></div>
<div class="blk" style="left:404px;top:232px;width:64px;height:532px;background:#c5e49b"></div>
<div class="blk" style="left:468px;top:232px;width:64px;height:532px;background:#dcedf9"></div>
<div class="blk" style="left:532px;top:232px;width:15px;height:532px;background:#c5e49b"></div>
<div class="blk" style="left:547px;top:232px;width:75px;height:532px;background:#dcedf9"></div>
<div class="blk" style="left:622px;top:232px;width:15px;height:532px;background:#c5e49b"></div>
<div class="blk" style="left:637px;top:232px;width:75px;height:532px;background:#dcedf9"></div>
<div class="blk" style="left:712px;top:232px;width:15px;height:532px;background:#c5e49b"></div>
<div class="blk" style="left:727px;top:232px;width:108px;height:532px;background:#dcedf9"></div>
<div class="blk" style="left:835px;top:232px;width:15px;height:532px;background:#c5e49b"></div>
<div class="blk" style="left:850px;top:232px;width:129px;height:532px;background:#dcedf9"></div>
<div class="blk" style="left:979px;top:232px;width:15px;height:532px;background:#c5e49b"></div>
<div class="blk" style="left:994px;top:232px;width:129px;height:532px;background:#dcedf9"></div>
<div class="blk" style="left:1123px;top:232px;width:15px;height:532px;background:#c5e49b"></div>
<div class="blk" style="left:1138px;top:232px;width:108px;height:532px;background:#dcedf9"></div>
<div class="blk" style="left:1246px;top:232px;width:15px;height:532px;background:#c5e49b"></div>
<div class="blk" style="left:1261px;top:232px;width:108px;height:532px;background:#dcedf9"></div>
<div class="blk" style="left:1369px;top:232px;width:15px;height:532px;background:#c5e49b"></div>
<div class="blk" style="left:1384px;top:232px;width:112px;height:532px;background:#dcedf9"></div>
<div class="blk" style="left:1496px;top:232px;width:15px;height:532px;background:#c5e49b"></div>
<div class="blk" style="left:1511px;top:232px;width:106px;height:532px;background:#dcedf9"></div>
<div class="blk" style="left:1617px;top:232px;width:80px;height:532px;background:#2389ba"></div>
<div class="blk" style="left:197px;top:296px;width:64px;height:16px;background:#ffc7ce"></div>
<div class="blk" style="left:197px;top:312px;width:64px;height:16px;background:#ffc7ce"></div>
<div class="blk" style="left:197px;top:408px;width:64px;height:17px;background:#ffc7ce"></div>
<div class="blk" style="left:197px;top:425px;width:64px;height:17px;background:#ffc7ce"></div>
<div class="blk" style="left:197px;top:524px;width:64px;height:16px;background:#ffc7ce"></div>
<div class="blk" style="left:197px;top:540px;width:64px;height:16px;background:#ffc7ce"></div>
<div class="blk" style="left:197px;top:636px;width:64px;height:16px;background:#ffc7ce"></div>
<div class="blk" style="left:197px;top:652px;width:64px;height:16px;background:#ffc7ce"></div>
<div class="blk" style="left:25px;top:764px;width:1672px;height:48px;background:#2389ba"></div>
<i class="hl" style="top:248px;left:26px;width:1591px"></i>
<i class="hlb" style="top:248px;left:1617px;width:80px"></i>
<i class="hl" style="top:264px;left:26px;width:1591px"></i>
<i class="hlb" style="top:264px;left:1617px;width:80px"></i>
<i class="hl" style="top:280px;left:26px;width:1591px"></i>
<i class="hlb" style="top:280px;left:1617px;width:80px"></i>
<i class="hl" style="top:296px;left:26px;width:1591px"></i>
<i class="hlb" style="top:296px;left:1617px;width:80px"></i>
<i class="hl" style="top:312px;left:26px;width:1591px"></i>
<i class="hlb" style="top:312px;left:1617px;width:80px"></i>
<i class="hl" style="top:328px;left:26px;width:1591px"></i>
<i class="hlb" style="top:328px;left:1617px;width:80px"></i>
<i class="hl" style="top:344px;left:26px;width:1591px"></i>
<i class="hlb" style="top:344px;left:1617px;width:80px"></i>
<i class="hl" style="top:360px;left:26px;width:1591px"></i>
<i class="hlb" style="top:360px;left:1617px;width:80px"></i>
<i class="hl" style="top:376px;left:26px;width:1591px"></i>
<i class="hlb" style="top:376px;left:1617px;width:80px"></i>
<i class="hl" style="top:392px;left:26px;width:1591px"></i>
<i class="hlb" style="top:392px;left:1617px;width:80px"></i>
<i class="hl" style="top:408px;left:26px;width:1591px"></i>
<i class="hlb" style="top:408px;left:1617px;width:80px"></i>
<i class="hl" style="top:425px;left:26px;width:1591px"></i>
<i class="hlb" style="top:425px;left:1617px;width:80px"></i>
<i class="hl" style="top:442px;left:26px;width:1591px"></i>
<i class="hlb" style="top:442px;left:1617px;width:80px"></i>
<i class="hl" style="top:459px;left:26px;width:1591px"></i>
<i class="hlb" style="top:459px;left:1617px;width:80px"></i>
<i class="hl" style="top:476px;left:26px;width:1591px"></i>
<i class="hlb" style="top:476px;left:1617px;width:80px"></i>
<i class="hl" style="top:492px;left:26px;width:1591px"></i>
<i class="hlb" style="top:492px;left:1617px;width:80px"></i>
<i class="hl" style="top:508px;left:26px;width:1591px"></i>
<i class="hlb" style="top:508px;left:1617px;width:80px"></i>
<i class="hl" style="top:524px;left:26px;width:1591px"></i>
<i class="hlb" style="top:524px;left:1617px;width:80px"></i>
<i class="hl" style="top:540px;left:26px;width:1591px"></i>
<i class="hlb" style="top:540px;left:1617px;width:80px"></i>
<i class="hl" style="top:556px;left:26px;width:1591px"></i>
<i class="hlb" style="top:556px;left:1617px;width:80px"></i>
<i class="hl" style="top:572px;left:26px;width:1591px"></i>
<i class="hlb" style="top:572px;left:1617px;width:80px"></i>
<i class="hl" style="top:588px;left:26px;width:1591px"></i>
<i class="hlb" style="top:588px;left:1617px;width:80px"></i>
<i class="hl" style="top:604px;left:26px;width:1591px"></i>
<i class="hlb" style="top:604px;left:1617px;width:80px"></i>
<i class="hl" style="top:620px;left:26px;width:1591px"></i>
<i class="hlb" style="top:620px;left:1617px;width:80px"></i>
<i class="hl" style="top:636px;left:26px;width:1591px"></i>
<i class="hlb" style="top:636px;left:1617px;width:80px"></i>
<i class="hl" style="top:652px;left:26px;width:1591px"></i>
<i class="hlb" style="top:652px;left:1617px;width:80px"></i>
<i class="hl" style="top:668px;left:26px;width:1591px"></i>
<i class="hlb" style="top:668px;left:1617px;width:80px"></i>
<i class="hl" style="top:684px;left:26px;width:1591px"></i>
<i class="hlb" style="top:684px;left:1617px;width:80px"></i>
<i class="hl" style="top:700px;left:26px;width:1591px"></i>
<i class="hlb" style="top:700px;left:1617px;width:80px"></i>
<i class="hl" style="top:716px;left:26px;width:1591px"></i>
<i class="hlb" style="top:716px;left:1617px;width:80px"></i>
<i class="hl" style="top:732px;left:26px;width:1591px"></i>
<i class="hlb" style="top:732px;left:1617px;width:80px"></i>
<i class="hl" style="top:748px;left:26px;width:1591px"></i>
<i class="hlb" style="top:748px;left:1617px;width:80px"></i>
<i class="hl" style="top:764px;left:26px;width:1591px"></i>
<i class="hlb" style="top:764px;left:1617px;width:80px"></i>
<div class="blk" style="left:26px;top:232px;width:170px;height:532px;background:rgba(197,228,155,.42)"></div>
<div class="blk" style="left:261px;top:232px;width:36px;height:532px;background:rgba(197,228,155,.42)"></div>
<div class="blk" style="left:298px;top:232px;width:41px;height:532px;background:rgba(197,228,155,.42)"></div>
<div class="blk" style="left:340px;top:232px;width:63px;height:532px;background:rgba(197,228,155,.42)"></div>
<div class="blk" style="left:404px;top:232px;width:63px;height:532px;background:rgba(197,228,155,.42)"></div>
<div class="blk" style="left:532px;top:232px;width:14px;height:532px;background:rgba(197,228,155,.42)"></div>
<div class="blk" style="left:622px;top:232px;width:14px;height:532px;background:rgba(197,228,155,.42)"></div>
<div class="blk" style="left:712px;top:232px;width:14px;height:532px;background:rgba(197,228,155,.42)"></div>
<div class="blk" style="left:835px;top:232px;width:14px;height:532px;background:rgba(197,228,155,.42)"></div>
<div class="blk" style="left:979px;top:232px;width:14px;height:532px;background:rgba(197,228,155,.42)"></div>
<div class="blk" style="left:1123px;top:232px;width:14px;height:532px;background:rgba(197,228,155,.42)"></div>
<div class="blk" style="left:1246px;top:232px;width:14px;height:532px;background:rgba(197,228,155,.42)"></div>
<div class="blk" style="left:1369px;top:232px;width:14px;height:532px;background:rgba(197,228,155,.42)"></div>
<div class="blk" style="left:1496px;top:232px;width:14px;height:532px;background:rgba(197,228,155,.42)"></div>
<i class="vl" style="left:196px;top:232px;height:532px"></i>
<i class="vl" style="left:260px;top:232px;height:532px"></i>
<i class="vl g" style="left:297px;top:232px;height:532px"></i>
<i class="vl g" style="left:339px;top:232px;height:532px"></i>
<i class="vl g" style="left:403px;top:232px;height:532px"></i>
<i class="vl" style="left:467px;top:232px;height:532px"></i>
<i class="vl" style="left:531px;top:232px;height:532px"></i>
<i class="vl" style="left:546px;top:232px;height:532px"></i>
<i class="vl" style="left:621px;top:232px;height:532px"></i>
<i class="vl" style="left:636px;top:232px;height:532px"></i>
<i class="vl" style="left:711px;top:232px;height:532px"></i>
<i class="vl" style="left:726px;top:232px;height:532px"></i>
<i class="vl" style="left:834px;top:232px;height:532px"></i>
<i class="vl" style="left:849px;top:232px;height:532px"></i>
<i class="vl" style="left:978px;top:232px;height:532px"></i>
<i class="vl" style="left:993px;top:232px;height:532px"></i>
<i class="vl" style="left:1122px;top:232px;height:532px"></i>
<i class="vl" style="left:1137px;top:232px;height:532px"></i>
<i class="vl" style="left:1245px;top:232px;height:532px"></i>
<i class="vl" style="left:1260px;top:232px;height:532px"></i>
<i class="vl" style="left:1368px;top:232px;height:532px"></i>
<i class="vl" style="left:1383px;top:232px;height:532px"></i>
<i class="vl" style="left:1495px;top:232px;height:532px"></i>
<i class="vl" style="left:1510px;top:232px;height:532px"></i>
<i class="vl" style="left:1616px;top:232px;height:532px"></i>
<i class="vlb" style="left:196px;top:204px;height:28px"></i>
<i class="vlb" style="left:260px;top:204px;height:28px"></i>
<i class="vlb" style="left:297px;top:204px;height:28px"></i>
<i class="vlb" style="left:339px;top:204px;height:28px"></i>
<i class="vlb" style="left:403px;top:204px;height:28px"></i>
<i class="vlb" style="left:467px;top:204px;height:28px"></i>
<i class="vlb" style="left:531px;top:204px;height:28px"></i>
<i class="vlb" style="left:546px;top:204px;height:28px"></i>
<i class="vlb" style="left:621px;top:204px;height:28px"></i>
<i class="vlb" style="left:636px;top:204px;height:28px"></i>
<i class="vlb" style="left:711px;top:204px;height:28px"></i>
<i class="vlb" style="left:726px;top:204px;height:28px"></i>
<i class="vlb" style="left:834px;top:204px;height:28px"></i>
<i class="vlb" style="left:849px;top:204px;height:28px"></i>
<i class="vlb" style="left:978px;top:204px;height:28px"></i>
<i class="vlb" style="left:993px;top:204px;height:28px"></i>
<i class="vlb" style="left:1122px;top:204px;height:28px"></i>
<i class="vlb" style="left:1137px;top:204px;height:28px"></i>
<i class="vlb" style="left:1245px;top:204px;height:28px"></i>
<i class="vlb" style="left:1260px;top:204px;height:28px"></i>
<i class="vlb" style="left:1368px;top:204px;height:28px"></i>
<i class="vlb" style="left:1383px;top:204px;height:28px"></i>
<i class="vlb" style="left:1495px;top:204px;height:28px"></i>
<i class="vlb" style="left:1510px;top:204px;height:28px"></i>
<i class="vlb" style="left:1616px;top:204px;height:28px"></i>
<i class="vl" style="left:25px;top:204px;height:608px;background:rgba(40,60,60,.16)"></i>
<i class="rd" style="top:204px"></i>
<i class="vl" style="left:25px;top:812px;height:177px;background:#b9b9b9"></i>
<i class="vl" style="left:1696px;top:204px;height:608px;background:rgba(0,40,60,.35)"></i>
<i class="hlb" style="top:780px;left:403px;width:1293px"></i>
<i class="hlb" style="top:796px;left:403px;width:1293px"></i>
<i class="vlb" style="left:403px;top:764px;height:48px"></i>
<i class="vlb" style="left:467px;top:764px;height:16px"></i>
<i class="vlb" style="left:546px;top:764px;height:16px"></i>
<i class="vlb" style="left:636px;top:764px;height:16px"></i>
<i class="vlb" style="left:726px;top:764px;height:16px"></i>
<i class="vlb" style="left:849px;top:764px;height:16px"></i>
<i class="vlb" style="left:993px;top:764px;height:16px"></i>
<i class="vlb" style="left:1137px;top:764px;height:16px"></i>
<i class="vlb" style="left:1260px;top:764px;height:16px"></i>
<i class="vlb" style="left:1383px;top:764px;height:16px"></i>
<i class="vlb" style="left:1510px;top:764px;height:16px"></i>
<i class="vlb" style="left:1616px;top:764px;height:16px"></i>
<div class="c h1" style="left:26px;top:204px;width:170px;height:28px">Dato</div>
<div class="c h1" style="left:197px;top:204px;width:63px;height:28px">Dag</div>
<div class="c h1" style="left:261px;top:204px;width:76px;height:28px">Hellig</div>
<div class="c h1" style="left:298px;top:204px;width:81px;height:28px">Pause</div>
<div class="c h1" style="left:340px;top:204px;width:63px;height:28px">Fra Kl</div>
<div class="c h1" style="left:404px;top:204px;width:63px;height:28px">Til Kl</div>
<div class="c h1" style="left:468px;top:204px;width:63px;height:28px">Timer</div>
<div class="c h1" style="left:532px;top:204px;width:14px;height:28px">P</div>
<div class="c h1" style="left:547px;top:204px;width:74px;height:28px">16-18 (20%)</div>
<div class="c h1" style="left:622px;top:204px;width:14px;height:28px">P</div>
<div class="c h1" style="left:637px;top:204px;width:74px;height:28px">18-21 (40%)</div>
<div class="c h1" style="left:712px;top:204px;width:14px;height:28px">P</div>
<div class="c h1" style="left:727px;top:204px;width:107px;height:28px">16-21 (Fre) (40%)</div>
<div class="c h1" style="left:835px;top:204px;width:14px;height:28px">P</div>
<div class="c h1" style="left:850px;top:204px;width:128px;height:28px">Hverdag 21-00 (100%)</div>
<div class="c h1" style="left:979px;top:204px;width:14px;height:28px">P</div>
<div class="c h1" style="left:994px;top:204px;width:128px;height:28px">Hverdag 00-07 (100%)</div>
<div class="c h1" style="left:1123px;top:204px;width:14px;height:28px">P</div>
<div class="c h1" style="left:1138px;top:204px;width:107px;height:28px">Lør -15:30 (100%)</div>
<div class="c h1" style="left:1246px;top:204px;width:14px;height:28px">P</div>
<div class="c h1" style="left:1261px;top:204px;width:107px;height:28px">Lør 15:30- (130%)</div>
<div class="c h1" style="left:1369px;top:204px;width:14px;height:28px">P</div>
<div class="c h1" style="left:1384px;top:204px;width:111px;height:28px">Søn (130%)</div>
<div class="c h1" style="left:1496px;top:204px;width:14px;height:28px">P</div>
<div class="c h1" style="left:1511px;top:204px;width:105px;height:28px">Helligdag (140 %)</div>
<div class="c h1" style="left:1617px;top:204px;width:79px;height:28px">Lønn</div>
<div class="c r" style="left:26px;top:232px;width:170px;height:16px;line-height:19px">tirsdag 1. september 2015</div>
<div class="c l" style="left:197px;top:232px;width:63px;height:16px;line-height:19px">tirsdag</div>
<div class="c r" style="left:26px;top:248px;width:170px;height:16px;line-height:19px">onsdag 2. september 2015</div>
<div class="c l" style="left:197px;top:248px;width:63px;height:16px;line-height:19px">onsdag</div>
<div class="c r" style="left:26px;top:264px;width:170px;height:16px;line-height:19px">torsdag 3. september 2015</div>
<div class="c l" style="left:197px;top:264px;width:63px;height:16px;line-height:19px">torsdag</div>
<div class="c r" style="left:26px;top:280px;width:170px;height:16px;line-height:19px">fredag 4. september 2015</div>
<div class="c l" style="left:197px;top:280px;width:63px;height:16px;line-height:19px">fredag</div>
<div class="c r" style="left:26px;top:296px;width:170px;height:16px;line-height:19px">lørdag 5. september 2015</div>
<div class="c l red" style="left:197px;top:296px;width:63px;height:16px;line-height:19px">lørdag</div>
<div class="c r" style="left:26px;top:312px;width:170px;height:16px;line-height:19px">søndag 6. september 2015</div>
<div class="c l red" style="left:197px;top:312px;width:63px;height:16px;line-height:19px">søndag</div>
<div class="c r" style="left:26px;top:328px;width:170px;height:16px;line-height:19px">mandag 7. september 2015</div>
<div class="c l" style="left:197px;top:328px;width:63px;height:16px;line-height:19px">mandag</div>
<div class="c r" style="left:26px;top:344px;width:170px;height:16px;line-height:19px">tirsdag 8. september 2015</div>
<div class="c l" style="left:197px;top:344px;width:63px;height:16px;line-height:19px">tirsdag</div>
<div class="c r" style="left:26px;top:360px;width:170px;height:16px;line-height:19px">onsdag 9. september 2015</div>
<div class="c l" style="left:197px;top:360px;width:63px;height:16px;line-height:19px">onsdag</div>
<div class="c r" style="left:26px;top:376px;width:170px;height:16px;line-height:19px">torsdag 10. september 2015</div>
<div class="c l" style="left:197px;top:376px;width:63px;height:16px;line-height:19px">torsdag</div>
<div class="c r" style="left:26px;top:392px;width:170px;height:16px;line-height:19px">fredag 11. september 2015</div>
<div class="c l" style="left:197px;top:392px;width:63px;height:16px;line-height:19px">fredag</div>
<div class="c r" style="left:26px;top:408px;width:170px;height:17px;line-height:20px">lørdag 12. september 2015</div>
<div class="c l red" style="left:197px;top:408px;width:63px;height:17px;line-height:20px">lørdag</div>
<div class="c r" style="left:26px;top:425px;width:170px;height:17px;line-height:20px">søndag 13. september 2015</div>
<div class="c l red" style="left:197px;top:425px;width:63px;height:17px;line-height:20px">søndag</div>
<div class="c r" style="left:26px;top:442px;width:170px;height:17px;line-height:20px">mandag 14. september 2015</div>
<div class="c l" style="left:197px;top:442px;width:63px;height:17px;line-height:20px">mandag</div>
<div class="c r" style="left:26px;top:459px;width:170px;height:17px;line-height:20px">tirsdag 15. september 2015</div>
<div class="c l" style="left:197px;top:459px;width:63px;height:17px;line-height:20px">tirsdag</div>
<div class="c r" style="left:26px;top:476px;width:170px;height:16px;line-height:19px">onsdag 16. september 2015</div>
<div class="c l" style="left:197px;top:476px;width:63px;height:16px;line-height:19px">onsdag</div>
<div class="c r" style="left:26px;top:492px;width:170px;height:16px;line-height:19px">torsdag 17. september 2015</div>
<div class="c l" style="left:197px;top:492px;width:63px;height:16px;line-height:19px">torsdag</div>
<div class="c r" style="left:26px;top:508px;width:170px;height:16px;line-height:19px">fredag 18. september 2015</div>
<div class="c l" style="left:197px;top:508px;width:63px;height:16px;line-height:19px">fredag</div>
<div class="c r" style="left:26px;top:524px;width:170px;height:16px;line-height:19px">lørdag 19. september 2015</div>
<div class="c l red" style="left:197px;top:524px;width:63px;height:16px;line-height:19px">lørdag</div>
<div class="c r" style="left:26px;top:540px;width:170px;height:16px;line-height:19px">søndag 20. september 2015</div>
<div class="c l red" style="left:197px;top:540px;width:63px;height:16px;line-height:19px">søndag</div>
<div class="c r" style="left:26px;top:556px;width:170px;height:16px;line-height:19px">mandag 21. september 2015</div>
<div class="c l" style="left:197px;top:556px;width:63px;height:16px;line-height:19px">mandag</div>
<div class="c r" style="left:26px;top:572px;width:170px;height:16px;line-height:19px">tirsdag 22. september 2015</div>
<div class="c l" style="left:197px;top:572px;width:63px;height:16px;line-height:19px">tirsdag</div>
<div class="c r" style="left:26px;top:588px;width:170px;height:16px;line-height:19px">onsdag 23. september 2015</div>
<div class="c l" style="left:197px;top:588px;width:63px;height:16px;line-height:19px">onsdag</div>
<div class="c r" style="left:26px;top:604px;width:170px;height:16px;line-height:19px">torsdag 24. september 2015</div>
<div class="c l" style="left:197px;top:604px;width:63px;height:16px;line-height:19px">torsdag</div>
<div class="c r" style="left:26px;top:620px;width:170px;height:16px;line-height:19px">fredag 25. september 2015</div>
<div class="c l" style="left:197px;top:620px;width:63px;height:16px;line-height:19px">fredag</div>
<div class="c r" style="left:26px;top:636px;width:170px;height:16px;line-height:19px">lørdag 26. september 2015</div>
<div class="c l red" style="left:197px;top:636px;width:63px;height:16px;line-height:19px">lørdag</div>
<div class="c r" style="left:26px;top:652px;width:170px;height:16px;line-height:19px">søndag 27. september 2015</div>
<div class="c l red" style="left:197px;top:652px;width:63px;height:16px;line-height:19px">søndag</div>
<div class="c r" style="left:26px;top:668px;width:170px;height:16px;line-height:19px">mandag 28. september 2015</div>
<div class="c l" style="left:197px;top:668px;width:63px;height:16px;line-height:19px">mandag</div>
<div class="c r" style="left:26px;top:684px;width:170px;height:16px;line-height:19px">tirsdag 29. september 2015</div>
<div class="c l" style="left:197px;top:684px;width:63px;height:16px;line-height:19px">tirsdag</div>
<div class="c r" style="left:26px;top:700px;width:170px;height:16px;line-height:19px">onsdag 30. september 2015</div>
<div class="c l" style="left:197px;top:700px;width:63px;height:16px;line-height:19px">onsdag</div>
<div class="c r" style="left:26px;top:716px;width:170px;height:16px;line-height:19px">torsdag 1. oktober 2015</div>
<div class="c l" style="left:197px;top:716px;width:63px;height:16px;line-height:19px">torsdag</div>
<div class="c ctr" style="left:298px;top:232px;width:41px;height:16px;line-height:19px">x</div>
<div class="c r n" style="left:340px;top:232px;width:63px;height:16px;line-height:19px">06:00</div>
<div class="c r n" style="left:404px;top:232px;width:63px;height:16px;line-height:19px">15:00</div>
<div class="c r n" style="left:468px;top:232px;width:63px;height:16px;line-height:19px">8,50</div>
<div class="c l" style="left:622px;top:232px;width:14px;height:16px;line-height:19px">x</div>
<div class="c r n" style="left:637px;top:232px;width:74px;height:16px;line-height:19px">-0,5</div>
<div class="c r w n" style="left:1617px;top:232px;width:79px;height:16px;line-height:19px">1 340,0</div>
<div class="c ctr" style="left:298px;top:248px;width:41px;height:16px;line-height:19px">x</div>
<div class="c r n" style="left:340px;top:248px;width:63px;height:16px;line-height:19px">02:00</div>
<div class="c r n" style="left:404px;top:248px;width:63px;height:16px;line-height:19px">03:00</div>
<div class="c r n" style="left:468px;top:248px;width:63px;height:16px;line-height:19px">0,50</div>
<div class="c l" style="left:532px;top:248px;width:14px;height:16px;line-height:19px">x</div>
<div class="c r n" style="left:547px;top:248px;width:74px;height:16px;line-height:19px">-0,5</div>
<div class="c r w n" style="left:1617px;top:248px;width:79px;height:16px;line-height:19px">64,0</div>
<div class="c r n" style="left:340px;top:264px;width:63px;height:16px;line-height:19px">09:00</div>
<div class="c r n" style="left:404px;top:264px;width:63px;height:16px;line-height:19px">12:00</div>
<div class="c r n" style="left:468px;top:264px;width:63px;height:16px;line-height:19px">3,00</div>
<div class="c r w n" style="left:1617px;top:264px;width:79px;height:16px;line-height:19px">480,0</div>
<div class="c r n" style="left:340px;top:280px;width:63px;height:16px;line-height:19px">20:00</div>
<div class="c r n" style="left:404px;top:280px;width:63px;height:16px;line-height:19px">06:00</div>
<div class="c r n" style="left:468px;top:280px;width:63px;height:16px;line-height:19px">10,00</div>
<div class="c r n" style="left:727px;top:280px;width:107px;height:16px;line-height:19px">1,0</div>
<div class="c r n" style="left:850px;top:280px;width:128px;height:16px;line-height:19px">3,0</div>
<div class="c r n" style="left:994px;top:280px;width:128px;height:16px;line-height:19px">6,0</div>
<div class="c r w n" style="left:1617px;top:280px;width:79px;height:16px;line-height:19px">2 528,0</div>
<div class="c r n" style="left:340px;top:296px;width:63px;height:16px;line-height:19px">12:00</div>
<div class="c r n" style="left:404px;top:296px;width:63px;height:16px;line-height:19px">16:00</div>
<div class="c r n" style="left:468px;top:296px;width:63px;height:16px;line-height:19px">4,00</div>
<div class="c r n" style="left:1138px;top:296px;width:107px;height:16px;line-height:19px">3,5</div>
<div class="c r n" style="left:1261px;top:296px;width:107px;height:16px;line-height:19px">0,5</div>
<div class="c r w n" style="left:1617px;top:296px;width:79px;height:16px;line-height:19px">1 304,0</div>
<div class="c r n" style="left:340px;top:312px;width:63px;height:16px;line-height:19px">16:00</div>
<div class="c r n" style="left:404px;top:312px;width:63px;height:16px;line-height:19px">23:00</div>
<div class="c r n" style="left:468px;top:312px;width:63px;height:16px;line-height:19px">7,00</div>
<div class="c r n" style="left:1384px;top:312px;width:111px;height:16px;line-height:19px">7,0</div>
<div class="c r w n" style="left:1617px;top:312px;width:79px;height:16px;line-height:19px">2 576,0</div>
<div class="c ctr" style="left:261px;top:328px;width:36px;height:16px;line-height:19px">x</div>
<div class="c r n" style="left:340px;top:328px;width:63px;height:16px;line-height:19px">21:00</div>
<div class="c r n" style="left:404px;top:328px;width:63px;height:16px;line-height:19px">04:30</div>
<div class="c r n" style="left:468px;top:328px;width:63px;height:16px;line-height:19px">7,50</div>
<div class="c r n" style="left:994px;top:328px;width:128px;height:16px;line-height:19px">4,5</div>
<div class="c r n" style="left:1511px;top:328px;width:105px;height:16px;line-height:19px">7,5</div>
<div class="c r w n" style="left:1617px;top:328px;width:79px;height:16px;line-height:19px">3 168,0</div>
<div class="c r n" style="left:340px;top:344px;width:63px;height:16px;line-height:19px">12:00</div>
<div class="c r n" style="left:404px;top:344px;width:63px;height:16px;line-height:19px">23:59</div>
<div class="c r n" style="left:468px;top:344px;width:63px;height:16px;line-height:19px">11,98</div>
<div class="c r n" style="left:547px;top:344px;width:74px;height:16px;line-height:19px">2,0</div>
<div class="c r n" style="left:637px;top:344px;width:74px;height:16px;line-height:19px">3,0</div>
<div class="c r n" style="left:850px;top:344px;width:128px;height:16px;line-height:19px">3,0</div>
<div class="c r w n" style="left:1617px;top:344px;width:79px;height:16px;line-height:19px">2 578,7</div>
<div class="c r n" style="left:340px;top:360px;width:63px;height:16px;line-height:19px">12:15</div>
<div class="c r n" style="left:404px;top:360px;width:63px;height:16px;line-height:19px">18:00</div>
<div class="c r n" style="left:468px;top:360px;width:63px;height:16px;line-height:19px">5,75</div>
<div class="c r n" style="left:547px;top:360px;width:74px;height:16px;line-height:19px">2,0</div>
<div class="c r w n" style="left:1617px;top:360px;width:79px;height:16px;line-height:19px">984,0</div>
<div class="c r n" style="left:340px;top:376px;width:63px;height:16px;line-height:19px">22:00</div>
<div class="c r n" style="left:404px;top:376px;width:63px;height:16px;line-height:19px">08:00</div>
<div class="c r n" style="left:468px;top:376px;width:63px;height:16px;line-height:19px">10,00</div>
<div class="c r n" style="left:850px;top:376px;width:128px;height:16px;line-height:19px">2,0</div>
<div class="c r n" style="left:994px;top:376px;width:128px;height:16px;line-height:19px">7,0</div>
<div class="c r w n" style="left:1617px;top:376px;width:79px;height:16px;line-height:19px">2 368,0</div>
<div class="c l w" style="left:404px;top:764px;width:63px;height:16px;line-height:19px">Sum</div>
<div class="c l w" style="left:404px;top:780px;width:63px;height:16px;line-height:19px">Skatt</div>
<div class="c l w" style="left:404px;top:796px;width:200px;height:16px;line-height:19px">Netto (utbetalt)</div>
<div class="c r w n" style="left:468px;top:764px;width:63px;height:16px;line-height:19px">68,23</div>
<div class="c r w n" style="left:547px;top:764px;width:74px;height:16px;line-height:19px">3,5</div>
<div class="c r w n" style="left:637px;top:764px;width:74px;height:16px;line-height:19px">2,5</div>
<div class="c r w n" style="left:727px;top:764px;width:107px;height:16px;line-height:19px">1,0</div>
<div class="c r w n" style="left:850px;top:764px;width:128px;height:16px;line-height:19px">8,0</div>
<div class="c r w n" style="left:994px;top:764px;width:128px;height:16px;line-height:19px">17,5</div>
<div class="c r w n" style="left:1138px;top:764px;width:107px;height:16px;line-height:19px">3,5</div>
<div class="c r w n" style="left:1261px;top:764px;width:107px;height:16px;line-height:19px">0,5</div>
<div class="c r w n" style="left:1384px;top:764px;width:111px;height:16px;line-height:19px">7,0</div>
<div class="c r w n" style="left:1511px;top:764px;width:105px;height:16px;line-height:19px">7,5</div>
<div class="c r w n" style="left:1617px;top:764px;width:79px;height:16px;line-height:19px">17 390,7</div>
<div class="c r w n" style="left:1617px;top:780px;width:79px;height:16px;line-height:19px">6 260,6</div>
<div class="c r w n" style="left:1617px;top:796px;width:79px;height:16px;line-height:19px">11 130,0</div>
<div id="selbox" style="left:402px;top:375px;width:63px;height:15px"></div>
<div id="selh" style="left:465px;top:390px"></div>
</div>
</body></html>
